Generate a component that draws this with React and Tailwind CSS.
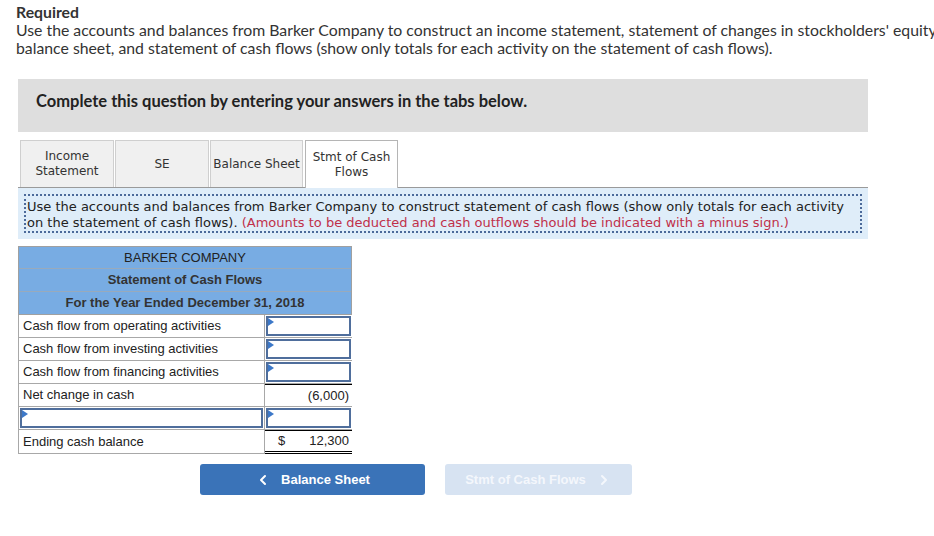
import React from 'react';
import { ChevronLeft, ChevronRight } from 'lucide-react';

const tabs = [
  { label: 'Income Statement', w: 'w-[94px]', ml: 'ml-0' },
  { label: 'SE', w: 'w-[94px]', ml: 'ml-px' },
  { label: 'Balance Sheet', w: 'w-[93px]', ml: 'ml-px' },
  { label: 'Stmt of Cash Flows', w: 'w-[93px]', ml: 'ml-[2px]', active: true },
];

const Marker = () => (
  <span className="absolute top-0 left-0 w-0 h-0 border-l-[6px] border-l-[#3c78c8] border-y-[4px] border-y-transparent" />
);

const InputBox = () => (
  <div className="relative h-full border-2 border-[#4f6e9c] bg-white">
    <Marker />
  </div>
);

const LabelCell = ({ children }) => (
  <div className="w-[247px] h-full border-l border-r border-b border-[#a8a8a8] px-[4px] flex items-center">
    {children}
  </div>
);

const Row = ({ label, value }) => (
  <div className="flex h-[23px]">
    <LabelCell>{label}</LabelCell>
    <div className="w-[87px] h-full border-b border-[#a8a8a8] px-[1px] py-[1px]">{value}</div>
  </div>
);

const App = () => {
  return (
    <div className="w-[934px] h-[536px] overflow-hidden bg-white text-[#333]">
      <div className="pl-4 pt-[3px] text-[15.8px] leading-[18px] font-['Lato',sans-serif]">
        <p className="font-bold">Required</p>
        <p className="whitespace-nowrap">
          Use the accounts and balances from Barker Company to construct an income statement, statement of changes in stockholders' equity,
        </p>
        <p>balance sheet, and statement of cash flows (show only totals for each activity on the statement of cash flows).</p>
      </div>

      <div className="ml-[18px] mt-[22px] w-[850px] h-[53px] bg-[#dedede] pl-[18px] pt-[10px] text-[16.5px] font-bold text-[#222] font-['Lato',sans-serif]">
        Complete this question by entering your answers in the tabs below.
      </div>

      <div className="ml-[20px] mt-[8px] flex font-['DejaVu_Sans',sans-serif] text-[12px] leading-[15px]">
        {tabs.map((t) => (
          <div
            key={t.label}
            className={`${t.w} ${t.ml} h-[47px] flex items-center justify-center text-center whitespace-nowrap border ${
              t.active
                ? 'bg-white border-[#b5b5b5] border-b-0 h-[48px] -mb-px relative z-10'
                : 'bg-[#f0f0f0] border-[#cfcfcf] border-b-0'
            }`}
          >
            {t.label === 'Income Statement' ? (
              <span>Income<br />Statement</span>
            ) : t.label === 'Stmt of Cash Flows' ? (
              <span>Stmt of Cash<br />Flows</span>
            ) : (
              t.label
            )}
          </div>
        ))}
      </div>

      <div className="ml-[18px] w-[850px] border-t border-[#9a9a9a] bg-[#dfedf9] px-[6px] pt-[6px] pb-[6px]">
        <div className="border-2 border-dotted border-[#4c6a9a] pl-[1px] pt-[3px] text-[13px] leading-[16px] font-['DejaVu_Sans',sans-serif] text-[#222]">
          Use the accounts and balances from Barker Company to construct statement of cash flows (show only totals for each activity on the statement of cash flows).{' '}
          <span className="text-[#c0304a]">(Amounts to be deducted and cash outflows should be indicated with a minus sign.)</span>
        </div>
      </div>

      <div className="ml-[18px] mt-[7px] w-[334px] text-[13px] font-['Liberation_Sans',Arial,sans-serif] text-[#222]">
        <div className="border border-[#a0a0a0] bg-[#78ace3]">
          <div className="h-[22px] flex items-center justify-center border-b border-[#9ab]">BARKER COMPANY</div>
          <div className="h-[23px] flex items-center justify-center border-b border-[#9ab] font-bold text-[#333]">Statement of Cash Flows</div>
          <div className="h-[22px] flex items-center justify-center font-bold text-[#333]">For the Year Ended December 31, 2018</div>
        </div>
        <Row label="Cash flow from operating activities" value={<InputBox />} />
        <Row label="Cash flow from investing activities" value={<InputBox />} />
        <Row label="Cash flow from financing activities" value={<InputBox />} />
        <div className="flex h-[23px]">
          <LabelCell>Net change in cash</LabelCell>
          <div className="w-[87px] h-full border-t border-t-black border-b border-b-[#a8a8a8] flex items-center justify-end pr-[3px]">(6,000)</div>
        </div>
        <div className="flex h-[23px]">
          <div className="w-[247px] h-full border-l border-r border-b border-[#a8a8a8] p-[1px]">
            <InputBox />
          </div>
          <div className="w-[87px] h-full border-b border-[#a8a8a8] p-[1px]">
            <InputBox />
          </div>
        </div>
        <div className="flex h-[24px]">
          <LabelCell>Ending cash balance</LabelCell>
          <div className="w-[87px] h-full border-t border-t-black border-b-[3px] border-double border-b-black flex items-center justify-between pl-[13px] pr-[3px]">
            <span>$</span>
            <span>12,300</span>
          </div>
        </div>
      </div>

      <div className="ml-[200px] mt-[10px] flex gap-[20px] text-[13px] font-bold font-['Liberation_Sans',Arial,sans-serif] text-white">
        <button className="w-[225px] h-[31px] rounded-[3px] bg-[#3a73b8] flex items-center justify-center gap-[10px]">
          <ChevronLeft size={16} strokeWidth={3} />
          <span>Balance Sheet</span>
        </button>
        <button className="w-[187px] h-[31px] rounded-[3px] bg-[#d7e3f2] flex items-center justify-center gap-[10px] text-[#f4f7fc]">
          <span>Stmt of Cash Flows</span>
          <ChevronRight size={16} strokeWidth={3} />
        </button>
      </div>
    </div>
  );
};

export default App;
